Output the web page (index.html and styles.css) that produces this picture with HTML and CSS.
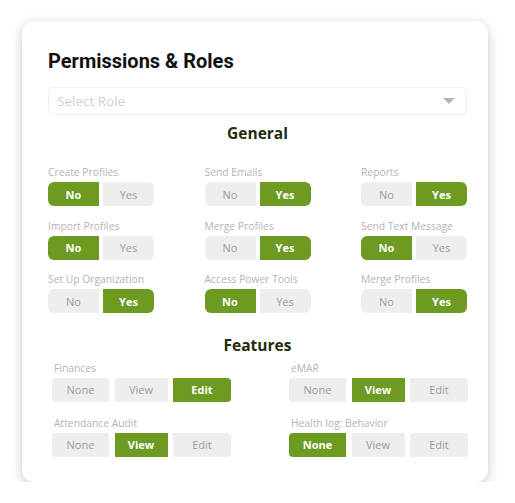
FILE: index.html
```html
<!DOCTYPE html>
<html lang="en">
<head>
<meta charset="utf-8">
<title>Permissions &amp; Roles</title>
<link rel="stylesheet" href="styles.css">
</head>
<body>
<div class="card">
  <h1 class="title">Permissions &amp; Roles</h1>
  <div class="select">
    <span class="placeholder">Select Role</span>
    <svg class="caret" width="12" height="6" viewBox="0 0 12 6"><path d="M0 0 H12 L6 6 Z" fill="#b9b3b3"/></svg>
  </div>

  <h2 class="section">General</h2>
  <div class="general">
    <div class="item"><div class="label">Create Profiles</div><div class="toggle"><span class="opt on">No</span><span class="opt">Yes</span></div></div>
    <div class="item"><div class="label">Send Emails</div><div class="toggle"><span class="opt">No</span><span class="opt on">Yes</span></div></div>
    <div class="item"><div class="label">Reports</div><div class="toggle"><span class="opt">No</span><span class="opt on">Yes</span></div></div>
    <div class="item"><div class="label">Import Profiles</div><div class="toggle"><span class="opt on">No</span><span class="opt">Yes</span></div></div>
    <div class="item"><div class="label">Merge Profiles</div><div class="toggle"><span class="opt">No</span><span class="opt on">Yes</span></div></div>
    <div class="item"><div class="label">Send Text Message</div><div class="toggle"><span class="opt on">No</span><span class="opt">Yes</span></div></div>
    <div class="item"><div class="label">Set Up Organization</div><div class="toggle"><span class="opt">No</span><span class="opt on">Yes</span></div></div>
    <div class="item"><div class="label">Access Power Tools</div><div class="toggle"><span class="opt on">No</span><span class="opt">Yes</span></div></div>
    <div class="item"><div class="label">Merge Profiles</div><div class="toggle"><span class="opt">No</span><span class="opt on">Yes</span></div></div>
  </div>

  <h2 class="section features-title">Features</h2>
  <div class="features">
    <div class="fitem"><div class="label flabel">Finances</div><div class="tri"><span class="opt">None</span><span class="opt">View</span><span class="opt on">Edit</span></div></div>
    <div class="fitem"><div class="label flabel">eMAR</div><div class="tri"><span class="opt">None</span><span class="opt on">View</span><span class="opt">Edit</span></div></div>
    <div class="fitem"><div class="label flabel">Attendance Audit</div><div class="tri"><span class="opt">None</span><span class="opt on">View</span><span class="opt">Edit</span></div></div>
    <div class="fitem"><div class="label flabel">Health log: Behavior</div><div class="tri"><span class="opt on">None</span><span class="opt">View</span><span class="opt">Edit</span></div></div>
  </div>
</div>
</body>
</html>
```

FILE: styles.css
```css
* { box-sizing: border-box; }

html, body {
  margin: 0;
  background: #ffffff;
}

body {
  padding: 21px 0 0 22px;
  font-family: "Open Sans", "DejaVu Sans", sans-serif;
}

.card {
  width: 466px;
  height: 461px;
  background: #ffffff;
  border-radius: 12px;
  box-shadow: 0 3px 12px rgba(0, 0, 0, 0.22);
  padding: 28px 21px 0 26px;
}

.title {
  margin: 0;
  font-family: "Roboto", "Liberation Sans", sans-serif;
  font-weight: 700;
  font-size: 20px;
  line-height: 24px;
  color: #111111;
}

.select {
  margin-top: 14px;
  height: 28px;
  border: 1px solid #efefef;
  border-radius: 5px;
  display: flex;
  align-items: center;
  justify-content: space-between;
  padding: 0 11px 0 8px;
}

.placeholder {
  font-size: 13.5px;
  color: #cfcfcf;
}

.section {
  margin: 8px 0 0;
  text-align: center;
  font-size: 15.5px;
  line-height: 20px;
  font-weight: 700;
  color: #1f2d0c;
}

.general {
  margin-top: 22px;
  display: grid;
  grid-template-columns: repeat(3, 106px);
  justify-content: space-between;
  row-gap: 12.5px;
}

.label {
  font-size: 10.3px;
  line-height: 14px;
  color: #b3b3b3;
  margin-bottom: 3px;
  white-space: nowrap;
}

.toggle {
  display: grid;
  grid-template-columns: 51px 51px;
  column-gap: 4px;
  height: 24px;
}

.opt {
  display: flex;
  align-items: center;
  justify-content: center;
  background: #eeeeee;
  color: #9b9b9b;
  font-size: 11px;
}

.opt.on {
  background: #6d9a21;
  color: #ffffff;
  font-weight: 700;
}

.toggle .opt:first-child { border-radius: 6px 0 0 6px; }
.toggle .opt:last-child { border-radius: 0 6px 6px 0; }

.features-title {
  margin-top: 21.5px;
}

.features {
  margin-top: 6px;
  padding-left: 4px;
  display: grid;
  grid-template-columns: 179px 178px;
  justify-content: space-between;
  row-gap: 14px;
}

.flabel {
  margin-bottom: 3px;
  padding-left: 2px;
}

.tri {
  display: grid;
  grid-template-columns: 57px 53px 58px;
  column-gap: 5.5px;
  height: 24px;
}

.tri .opt:first-child { border-radius: 4px 0 0 4px; }
.tri .opt:last-child { border-radius: 0 4px 4px 0; }
```
